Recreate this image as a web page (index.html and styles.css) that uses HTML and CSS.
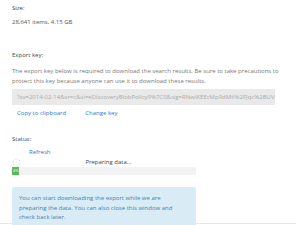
FILE: index.html
```html
<!DOCTYPE html>
<html>
<head>
<meta charset="utf-8">
<link rel="stylesheet" href="styles.css">
</head>
<body>
<div class="page">
  <div class="label size-label">Size:</div>
  <div class="value">28,641 items, 4.15 GB</div>

  <div class="label key-label">Export key:</div>
  <p class="desc">The export key below is required to download the search results. Be sure to take precautions to protect this key because anyone can use it to download these results.</p>
  <div class="keybox">?sv=2014-02-14&amp;sr=c&amp;si=eDiscoveryBlobPolicy9%7C0&amp;sig=RNwlKEEcMp9dM6%2FJqc%2BUV9</div>
  <div class="links">
    <a class="link">Copy to clipboard</a>
    <a class="link">Change key</a>
  </div>

  <div class="label status-label">Status:</div>
  <div class="refresh"><a class="link">Refresh</a></div>
  <div class="progress">
    <div class="prog-head">
      <svg class="spinner" width="9" height="9" viewBox="0 0 9 9">
        <circle cx="4.5" cy="4.5" r="3.6" fill="none" stroke="#b8b8b8" stroke-width="0.8" stroke-dasharray="0.8 1.4"/>
      </svg>
      <span class="prog-text">Preparing data...</span>
    </div>
    <div class="bar"><div class="fill" style="width:4%">4%</div></div>
  </div>
  <div class="info">You can start downloading the export while we are<br>preparing the data. You can also close this window and<br>check back later.</div>
</div>
<div class="bottom-line"></div>
</body>
</html>
```
FILE: styles.css
```css
html, body {
  margin: 0;
  padding: 0;
  background: #fff;
  overflow: hidden;
}
body {
  width: 300px;
  height: 225px;
  position: relative;
  font-family: "Open Sans", "Noto Sans", sans-serif;
  font-size: 6px;
  line-height: 10px;
  color: #555;
}
.page {
  padding: 3px 12px 0 12px;
}
.label {
  color: #444;
}
.value {
  margin-top: 4px;
  color: #555;
}
.key-label {
  margin-top: 23px;
}
.desc {
  margin: 6px 0 0 0;
  color: #777;
  width: 276px;
}
.keybox {
  margin-top: 3px;
  width: 258px;
  height: 16px;
  line-height: 16px;
  padding-left: 5px;
  background: #e9e9e9;
  color: #aaa;
  white-space: nowrap;
  overflow: hidden;
}
.links {
  margin-top: 3px;
  padding-left: 5px;
  display: flex;
  gap: 19px;
}
.link {
  color: #2c7dd0;
}
.status-label {
  margin-top: 16px;
}
.refresh {
  margin-top: 3px;
  padding-left: 17px;
}
.progress {
  width: 184px;
}
.prog-head {
  display: flex;
  align-items: center;
  height: 10px;
}
.spinner {
  flex: none;
}
.prog-text {
  flex: 1;
  text-align: center;
  color: #444;
}
.bar {
  height: 8px;
  background: #f3f3f3;
  border-radius: 1px;
}
.fill {
  height: 8px;
  min-width: 7px;
  background: #5cb85c;
  color: #fff;
  font-size: 4px;
  line-height: 8px;
  text-align: center;
}
.info {
  margin-top: 12px;
  width: 170px;
  padding: 7px 7px 6px 7px;
  background: #d9ecf6;
  border-radius: 2px;
  color: #3d82ad;
  line-height: 9.5px;
  white-space: nowrap;
}
.bottom-line {
  position: absolute;
  left: 0;
  top: 223px;
  width: 296px;
  height: 1px;
  background: #e6e6e6;
}
```
